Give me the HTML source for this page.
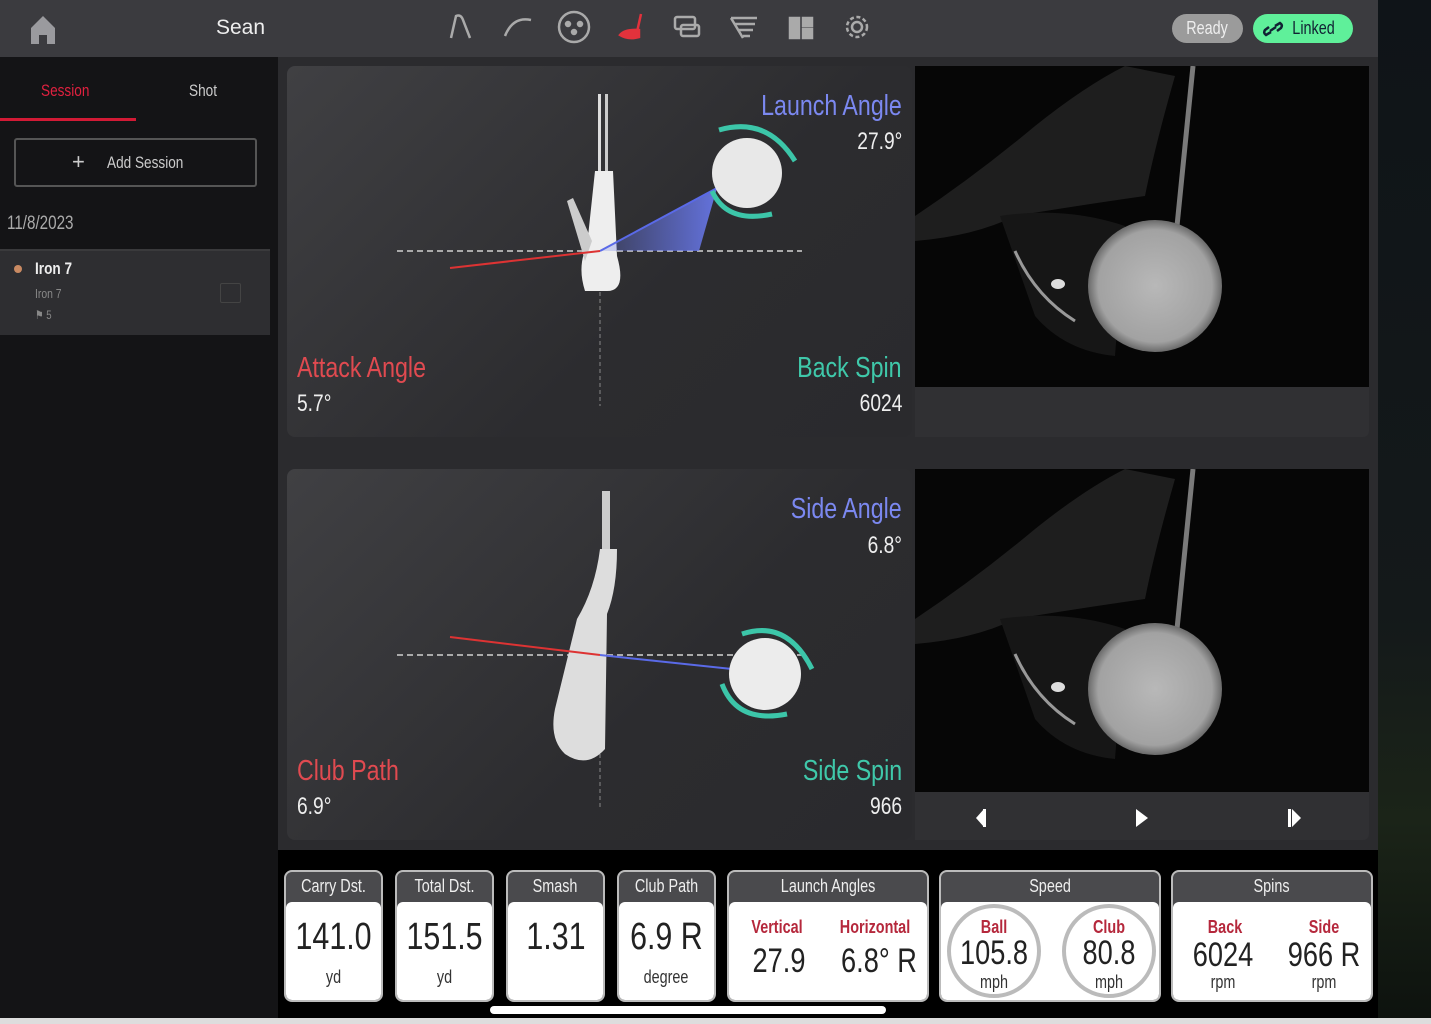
<!DOCTYPE html>
<html><head><meta charset="utf-8"><style>
*{margin:0;padding:0;box-sizing:border-box}
body{width:1431px;height:1024px;overflow:hidden;background:#0e1216;font-family:"Liberation Sans",sans-serif;color:#fff;position:relative}
.a{position:absolute;white-space:nowrap}
.n{transform:scaleX(.8);transform-origin:left top}
.nr{transform:scaleX(.8);transform-origin:right top}
.nc{display:inline-block;transform:scaleX(.8);transform-origin:center}
.card{position:absolute;top:870px;height:132px;background:#4a4a4d;border-radius:8px;border:2px solid #bbb;overflow:hidden}
.card .h{height:30px;line-height:28px;text-align:center;font-size:18px;color:#eee}
.card .b{position:absolute;top:30px;left:0;right:0;bottom:0;background:#fff;border-radius:6px;color:#222;text-align:center}
.big{font-size:38px;color:#222}
.unit{font-size:18px;color:#333}
.red{color:#b5283c;font-weight:bold;font-size:18px}
.cc{transform:translateX(-50%) scaleX(.8)}
</style></head><body>
<div class="a" style="left:1378px;top:0;width:53px;height:1024px;background:linear-gradient(#0f1418,#14191a 60%,#1b2418 80%,#0d120e)"></div>
<div class="a" style="left:0;top:0;width:1378px;height:57px;background:#3b3b3f"></div>
<svg class="a" style="left:28px;top:14px" width="30" height="32" viewBox="0 0 30 32"><path d="M15 2 L27 14 V30 H19 V21 H11 V30 H3 V14 Z" fill="#9a9a9e"/></svg>
<div class="a" style="left:216px;top:16px;font-size:21px;color:#eee">Sean</div>
<svg class="a" style="left:445px;top:10px" width="430" height="34" viewBox="0 0 430 34" fill="none" stroke="#aaa" stroke-width="2.5">
<path d="M6 28 L11 6 Q16 4 18 10 L25 28"/>
<path d="M60 26 Q68 6 86 10"/>
<circle cx="129" cy="17" r="15"/><circle cx="123" cy="14" r="2" fill="#aaa"/><circle cx="135" cy="14" r="2" fill="#aaa"/><circle cx="129" cy="22" r="2" fill="#aaa"/>
<path d="M196 4 L192 22" stroke="#e2323c"/><path d="M175 25 Q180 19 194 20 L194 27 Q183 30 175 25Z" fill="#e2323c" stroke="#e2323c"/>
<rect x="230" y="7" width="20" height="12" rx="2"/><rect x="236" y="15" width="18" height="11" rx="2"/>
<path d="M286 8 L312 8 M290 14 L310 14 M294 20 L308 20 M298 26 L305 26 M286 8 L298 28"/>
<rect x="345" y="8" width="9" height="20" fill="#aaa"/><rect x="358" y="8" width="9" height="8" fill="#aaa"/><rect x="358" y="19" width="9" height="9" fill="#aaa"/>
<circle cx="412" cy="17" r="5"/><circle cx="412" cy="17" r="10" stroke-dasharray="4 2.6"/>
</svg>
<div class="a" style="left:1172px;top:14px;width:71px;height:29px;background:#9b9b9b;border-radius:15px;text-align:center;line-height:29px;font-size:18px;color:#eee"><span class="nc">Ready</span></div>
<div class="a" style="left:1253px;top:14px;width:100px;height:29px;background:#5ff09a;border-radius:15px;line-height:29px;font-size:18px;color:#123;padding-left:34px"><span class="nc">Linked</span></div>
<svg class="a" style="left:1262px;top:19px" width="22" height="20" viewBox="0 0 22 20" fill="none" stroke="#123" stroke-width="2.5"><path d="M9 13 L4 16 Q1 14 3 11 L7 8 M13 7 L18 4 Q21 6 19 9 L15 12 M8 12 L14 8"/></svg>
<div class="a" style="left:0;top:57px;width:278px;height:967px;background:#141416"></div>
<div class="a n" style="left:41px;top:81px;font-size:17px;color:#e0213f">Session</div>
<div class="a n" style="left:189px;top:81px;font-size:17px;color:#ccc">Shot</div>
<div class="a" style="left:0;top:118px;width:136px;height:3px;background:#d21a35"></div>
<div class="a" style="left:14px;top:138px;width:243px;height:49px;border:2px solid #555;border-radius:3px"></div>
<div class="a" style="left:72px;top:149px;font-size:22px;color:#ccc">+</div>
<div class="a n" style="left:107px;top:153px;font-size:17px;color:#ccc">Add Session</div>
<div class="a n" style="left:7px;top:213px;font-size:19px;color:#aaa">11/8/2023</div>
<div class="a" style="left:0;top:249px;width:270px;height:86px;background:#2e2e31;border-top:2px solid #3a3a3c"></div>
<div class="a" style="left:14px;top:265px;width:8px;height:8px;border-radius:50%;background:#c98a62"></div>
<div class="a n" style="left:35px;top:259px;font-size:17px;font-weight:bold;color:#eee">Iron 7</div>
<div class="a n" style="left:35px;top:286px;font-size:13px;color:#888">Iron 7</div>
<div class="a n" style="left:35px;top:308px;font-size:12px;color:#888">⚑ 5</div>
<div class="a" style="left:220px;top:283px;width:21px;height:20px;border:1.5px solid #444;border-radius:2px"></div>
<div class="a" style="left:278px;top:57px;width:1100px;height:793px;background:#2b2b2e"></div>
<div class="a" style="left:287px;top:66px;width:625px;height:371px;border-radius:8px;background:linear-gradient(135deg,#404043,#2c2c2f 60%,#2a2a2d)"></div>
<div class="a" style="left:287px;top:469px;width:625px;height:371px;border-radius:8px;background:linear-gradient(135deg,#404043,#2c2c2f 60%,#2a2a2d)"></div>
<div class="a" style="left:915px;top:66px;width:454px;height:371px;background:#303033;border-radius:0 6px 6px 0"></div>
<div class="a" style="left:915px;top:66px;width:454px;height:321px;background:#060606"></div>
<div class="a" style="left:915px;top:469px;width:454px;height:371px;background:#303033;border-radius:0 6px 6px 0"></div>
<div class="a" style="left:915px;top:469px;width:454px;height:323px;background:#060606"></div>
<svg width="0" height="0" style="position:absolute"><defs><radialGradient id="bl" cx="0.5" cy="0.5"><stop offset="0" stop-color="#b8b8b8"/><stop offset="0.85" stop-color="#a2a2a2"/><stop offset="1" stop-color="#6a6a6a"/></radialGradient></defs></svg>
<svg class="a" style="left:915px;top:66px" width="454" height="321">
<path d="M0 150 Q60 110 120 60 Q170 20 210 0 L260 10 Q240 80 230 130 Q160 140 100 150 Q60 170 0 175Z" fill="#1e1e1e"/>
<path d="M85 150 Q150 140 210 160 L200 290 Q150 285 120 250Z" fill="#161616"/>
<path d="M100 185 Q120 230 160 255" stroke="#999" stroke-width="3" fill="none"/>
<ellipse cx="143" cy="218" rx="7" ry="5" fill="#ddd"/>
<line x1="278" y1="0" x2="262" y2="160" stroke="#7a7a7a" stroke-width="5"/>
<ellipse cx="240" cy="220" rx="67" ry="66" fill="url(#bl)"/></svg>
<svg class="a" style="left:915px;top:469px" width="454" height="323">
<path d="M0 150 Q60 110 120 60 Q170 20 210 0 L260 10 Q240 80 230 130 Q160 140 100 150 Q60 170 0 175Z" fill="#1e1e1e"/>
<path d="M85 150 Q150 140 210 160 L200 290 Q150 285 120 250Z" fill="#161616"/>
<path d="M100 185 Q120 230 160 255" stroke="#999" stroke-width="3" fill="none"/>
<ellipse cx="143" cy="218" rx="7" ry="5" fill="#ddd"/>
<line x1="278" y1="0" x2="262" y2="160" stroke="#7a7a7a" stroke-width="5"/>
<ellipse cx="240" cy="220" rx="67" ry="66" fill="url(#bl)"/></svg>
<svg class="a" style="left:975px;top:806px" width="340" height="24" fill="#fff"><rect x="8" y="3" width="3" height="18"/><path d="M1 12 L9 3 V21Z"/>
<path d="M161 3 L173 12 L161 21Z"/><rect x="313" y="3" width="3" height="18"/><path d="M317 3 L326 12 L317 21Z"/></svg>
<svg class="a" style="left:287px;top:66px" width="625" height="371">
<defs><linearGradient id="bw" x1="0" x2="1"><stop offset="0" stop-color="#6a7af0" stop-opacity=".2"/><stop offset="1" stop-color="#6a7af0" stop-opacity=".9"/></linearGradient></defs>
<line x1="110" y1="185" x2="515" y2="185" stroke="#aaa" stroke-width="2" stroke-dasharray="6 4"/>
<line x1="313" y1="100" x2="313" y2="340" stroke="#888" stroke-dasharray="4 3"/>
<rect x="311" y="28" width="3" height="150" fill="#ddd"/><rect x="318" y="28" width="3" height="150" fill="#ccc"/>
<path d="M308 105 L326 105 L330 190 Q340 225 320 225 L298 225 Q290 200 300 180Z" fill="#eee"/>
<path d="M280 135 L286 132 L305 175 L298 195 Z" fill="#ccc"/>
<path d="M313 185 L430 122 L412 185 Z" fill="url(#bw)"/>
<line x1="313" y1="185" x2="430" y2="122" stroke="#5a6ae8" stroke-width="2"/>
<line x1="163" y1="202" x2="313" y2="185" stroke="#d33" stroke-width="2"/>
<circle cx="460" cy="107" r="35" fill="#e8e8e8"/>
<path d="M432 64 Q480 50 508 95" stroke="#3cc6a9" stroke-width="5" fill="none"/>
<path d="M425 125 Q440 158 485 148" stroke="#3cc6a9" stroke-width="5" fill="none"/>
</svg>
<div class="a nr" style="right:529px;top:90px;font-size:29px;color:#7b88f0">Launch Angle</div>
<div class="a nr" style="right:529px;top:128px;font-size:24px;color:#eee">27.9°</div>
<div class="a n" style="left:297px;top:352px;font-size:29px;color:#e04a50">Attack Angle</div>
<div class="a n" style="left:297px;top:390px;font-size:24px;color:#eee">5.7°</div>
<div class="a nr" style="right:529px;top:352px;font-size:29px;color:#3fc8aa">Back Spin</div>
<div class="a nr" style="right:529px;top:390px;font-size:24px;color:#eee">6024</div>
<svg class="a" style="left:287px;top:469px" width="625" height="371">
<line x1="110" y1="186" x2="515" y2="186" stroke="#aaa" stroke-width="2" stroke-dasharray="6 4"/>
<line x1="313" y1="250" x2="313" y2="340" stroke="#888" stroke-dasharray="4 3"/>
<rect x="315" y="22" width="8" height="60" fill="#ccc"/>
<path d="M313 80 L330 80 Q330 120 320 145 L318 280 Q300 300 278 285 Q262 270 268 240 L290 150 Q308 120 313 80Z" fill="#ddd"/>
<line x1="163" y1="168" x2="313" y2="186" stroke="#d33" stroke-width="2"/>
<line x1="313" y1="186" x2="445" y2="200" stroke="#5a6ae8" stroke-width="2"/>
<circle cx="478" cy="205" r="36" fill="#ececec"/>
<path d="M455 165 Q500 150 525 200" stroke="#3cc6a9" stroke-width="5" fill="none"/>
<path d="M435 215 Q450 255 500 245" stroke="#3cc6a9" stroke-width="5" fill="none"/>
</svg>
<div class="a nr" style="right:529px;top:493px;font-size:29px;color:#7b88f0">Side Angle</div>
<div class="a nr" style="right:529px;top:532px;font-size:24px;color:#eee">6.8°</div>
<div class="a n" style="left:297px;top:755px;font-size:29px;color:#e04a50">Club Path</div>
<div class="a n" style="left:297px;top:793px;font-size:24px;color:#eee">6.9°</div>
<div class="a nr" style="right:529px;top:755px;font-size:29px;color:#3fc8aa">Side Spin</div>
<div class="a nr" style="right:529px;top:793px;font-size:24px;color:#eee">966</div>
<div class="a" style="left:278px;top:850px;width:1100px;height:170px;background:#000"></div>
<div class="a" style="left:0;top:1018px;width:1431px;height:6px;background:#ddd"></div>
<div class="card" style="left:284px;width:99px"><div class="h"><span class="nc">Carry Dst.</span></div><div class="b"><div class="big" style="margin-top:14px"><span class="nc">141.0</span></div><div class="unit" style="margin-top:8px"><span class="nc">yd</span></div></div></div>
<div class="card" style="left:395px;width:99px"><div class="h"><span class="nc">Total Dst.</span></div><div class="b"><div class="big" style="margin-top:14px"><span class="nc">151.5</span></div><div class="unit" style="margin-top:8px"><span class="nc">yd</span></div></div></div>
<div class="card" style="left:506px;width:99px"><div class="h"><span class="nc">Smash</span></div><div class="b"><div class="big" style="margin-top:14px"><span class="nc">1.31</span></div></div></div>
<div class="card" style="left:617px;width:99px"><div class="h"><span class="nc">Club Path</span></div><div class="b"><div class="big" style="margin-top:14px"><span class="nc">6.9 R</span></div><div class="unit" style="margin-top:8px"><span class="nc">degree</span></div></div></div>
<div class="card" style="left:727px;width:202px"><div class="h"><span class="nc">Launch Angles</span></div><div class="b">
<div class="a red cc" style="left:48px;top:15px">Vertical</div><div class="a red cc" style="left:146px;top:15px">Horizontal</div>
<div class="a cc" style="left:50px;top:40px;font-size:34px">27.9</div><div class="a cc" style="left:150px;top:40px;font-size:34px">6.8° R</div></div></div>
<div class="card" style="left:939px;width:222px"><div class="h"><span class="nc">Speed</span></div><div class="b">
<div class="a" style="left:6px;top:2px;width:94px;height:94px;border:4px solid #bbb;border-radius:50%"></div>
<div class="a" style="left:121px;top:2px;width:94px;height:94px;border:4px solid #bbb;border-radius:50%"></div>
<div class="a red cc" style="left:53px;top:15px">Ball</div><div class="a red cc" style="left:168px;top:15px">Club</div>
<div class="a cc" style="left:53px;top:32px;font-size:34px">105.8</div><div class="a cc" style="left:168px;top:32px;font-size:34px">80.8</div>
<div class="a unit cc" style="left:53px;top:70px">mph</div><div class="a unit cc" style="left:168px;top:70px">mph</div></div></div>
<div class="card" style="left:1171px;width:202px"><div class="h"><span class="nc">Spins</span></div><div class="b">
<div class="a red cc" style="left:52px;top:15px">Back</div><div class="a red cc" style="left:151px;top:15px">Side</div>
<div class="a cc" style="left:50px;top:34px;font-size:34px">6024</div><div class="a cc" style="left:151px;top:34px;font-size:34px">966 R</div>
<div class="a unit cc" style="left:50px;top:70px">rpm</div><div class="a unit cc" style="left:151px;top:70px">rpm</div></div></div>
<div class="a" style="left:490px;top:1006px;width:396px;height:8px;border-radius:4px;background:#fff"></div>
</body></html>
